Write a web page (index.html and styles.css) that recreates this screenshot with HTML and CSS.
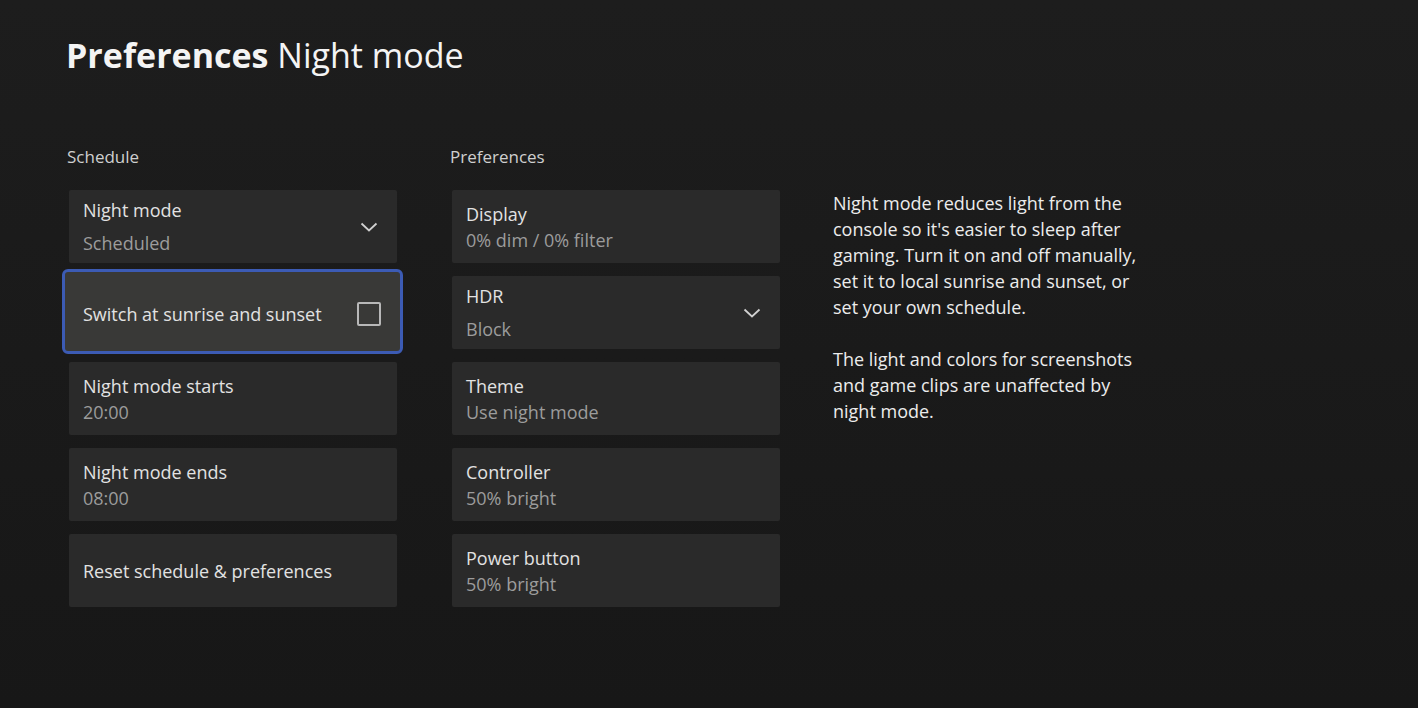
FILE: index.html
```html
<!DOCTYPE html>
<html lang="en">
<head>
    <meta charset="UTF-8">
    <meta name="viewport" content="width=device-width, initial-scale=1.0">
    <title>Night mode</title>
    <link rel="stylesheet" href="styles.css">
</head>
<body>
    <div class="page">
        <h1><strong>Preferences</strong> Night mode</h1>

        <div class="columns">
            <div class="column">
                <h2>Schedule</h2>
                <div class="tiles">
                    <div class="tile dropdown">
                        <div class="text">
                            <div class="label">Night mode</div>
                            <div class="value">Scheduled</div>
                        </div>
                        <svg class="chevron" width="18" height="10" viewBox="0 0 18 10"><path d="M1.5 1.5 L9 8.5 L16.5 1.5" fill="none" stroke="#d0d0d0" stroke-width="1.8"/></svg>
                    </div>
                    <div class="tile focus">
                        <div class="label">Switch at sunrise and sunset</div>
                        <span class="checkbox"></span>
                    </div>
                    <div class="tile">
                        <div class="label">Night mode starts</div>
                        <div class="value">20:00</div>
                    </div>
                    <div class="tile">
                        <div class="label">Night mode ends</div>
                        <div class="value">08:00</div>
                    </div>
                    <div class="tile single">
                        <div class="label">Reset schedule &amp; preferences</div>
                    </div>
                </div>
            </div>

            <div class="column">
                <h2>Preferences</h2>
                <div class="tiles">
                    <div class="tile">
                        <div class="label">Display</div>
                        <div class="value">0% dim / 0% filter</div>
                    </div>
                    <div class="tile dropdown">
                        <div class="text">
                            <div class="label">HDR</div>
                            <div class="value">Block</div>
                        </div>
                        <svg class="chevron" width="18" height="10" viewBox="0 0 18 10"><path d="M1.5 1.5 L9 8.5 L16.5 1.5" fill="none" stroke="#d0d0d0" stroke-width="1.8"/></svg>
                    </div>
                    <div class="tile">
                        <div class="label">Theme</div>
                        <div class="value">Use night mode</div>
                    </div>
                    <div class="tile">
                        <div class="label">Controller</div>
                        <div class="value">50% bright</div>
                    </div>
                    <div class="tile">
                        <div class="label">Power button</div>
                        <div class="value">50% bright</div>
                    </div>
                </div>
            </div>

            <div class="description">
                <p>Night mode reduces light from the console so it's easier to sleep after gaming. Turn it on and off manually, set it to local sunrise and sunset, or set your own schedule.</p>
                <p>The light and colors for screenshots and game clips are unaffected by night mode.</p>
            </div>
        </div>
    </div>
</body>
</html>
```

FILE: styles.css
```css
body {
    margin: 0;
    font-family: 'Open Sans', 'Noto Sans', sans-serif;
    background: linear-gradient(180deg, #1d1d1d 0%, #171717 100%);
    color: #e2e2e2;
    min-height: 100vh;
}
.page {
    padding: 30px 0 0 66px;
}
h1 {
    margin: 0;
    font-size: 34px;
    font-weight: 500;
    line-height: 50px;
    color: #f4f4f4;
}
h1 strong {
    font-weight: 700;
}
.columns {
    display: flex;
    gap: 53px;
    margin-top: 65px;
    padding-left: 1px;
}
.column {
    width: 330px;
}
h2 {
    margin: 0 0 21px 0;
    font-size: 17px;
    font-weight: 500;
    line-height: 24px;
    color: #cfcfcf;
}
.tiles {
    display: flex;
    flex-direction: column;
    gap: 13px;
    padding-left: 2px;
}
.tile {
    box-sizing: border-box;
    height: 73px;
    padding: 11px 14px;
    background: #2a2a2a;
    border-radius: 2px;
    font-size: 18px;
    line-height: 26px;
}
.label {
    color: #e2e2e2;
}
.value {
    color: #9c9c9c;
}
.tile.dropdown {
    display: flex;
    align-items: center;
    justify-content: space-between;
    padding: 3px 19px 3px 14px;
    line-height: 33px;
}
.tile.single {
    display: flex;
    align-items: center;
}
.tile.focus {
    display: flex;
    align-items: center;
    justify-content: space-between;
    height: 85px;
    margin: -7px -6px -5px -7px;
    padding: 4px 19px 0 18px;
    background: #393937;
    border: 3px solid #3c5bb4;
    border-radius: 6px;
}
.checkbox {
    width: 20px;
    height: 20px;
    border: 2px solid #b8b8b8;
    border-radius: 2px;
}
.description {
    width: 322px;
    margin-top: 45px;
    font-size: 18px;
    line-height: 26px;
    color: #ececec;
}
.description p {
    margin: 0 0 26px 0;
}
```
